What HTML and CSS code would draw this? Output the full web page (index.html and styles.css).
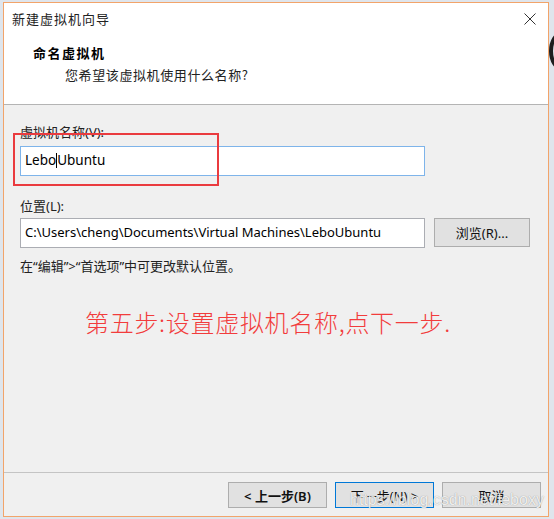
FILE: index.html
```html
<!DOCTYPE html>
<html lang="zh-CN">
<head>
<meta charset="utf-8">
<title>新建虚拟机向导</title>
<link rel="stylesheet" href="styles.css">
</head>
<body>
<div class="backdrop-arc"></div>
<div class="window">
  <div class="header">
    <div class="titlebar">
      <span class="title">新建虚拟机向导</span>
      <svg class="close" width="12" height="12" viewBox="0 0 12 12"><path d="M0.5 0.5 L11.5 11.5 M11.5 0.5 L0.5 11.5" stroke="#333" stroke-width="1" fill="none"/></svg>
    </div>
    <div class="heading">命名虚拟机</div>
    <div class="subtitle">您希望该虚拟机使用什么名称?</div>
  </div>
  <div class="content">
    <div class="label first">虚拟机名称(V):</div>
    <div class="field name-field">Lebo<span class="caret"></span>Ubuntu</div>
    <div class="label second">位置(L):</div>
    <div class="path-row">
      <div class="field path-field">C:\Users\cheng\Documents\Virtual Machines\LeboUbuntu</div>
      <div class="btn browse">浏览(R)...</div>
    </div>
    <div class="note">在“编辑”&gt;“首选项”中可更改默认位置。</div>
    <div class="annotation">第五步:设置虚拟机名称,点下一步.</div>
    <div class="red-box"></div>
  </div>
  <div class="footer">
    <div class="btn back">&lt; 上一步(B)</div>
    <div class="btn next">下一步(N) &gt;</div>
    <div class="btn cancel">取消</div>
  </div>
</div>
<div class="watermark">https://blog.csdn.net/leboxy</div>
</body>
</html>
```
FILE: styles.css
```css
html, body {
  margin: 0;
  padding: 0;
}
body {
  width: 554px;
  height: 519px;
  overflow: hidden;
  position: relative;
  background: #dfe5ec;
  font-family: "Noto Sans", "Noto Sans CJK SC", sans-serif;
  font-size: 13px;
  color: #000;
}
.backdrop-arc {
  position: absolute;
  left: 549px;
  top: 32px;
  width: 16px;
  height: 30px;
  border: 4px solid #1e1e1e;
  border-radius: 50%;
}
.window {
  position: relative;
  margin: 2px 0 0 3px;
  width: 546px;
  height: 515px;
  box-sizing: border-box;
  border: 1px solid #f2a46a;
  background: #f0f0f0;
  display: flex;
  flex-direction: column;
}
.header {
  background: #fff;
  height: 101px;
  border-bottom: 1px solid #b4b4b4;
}
.titlebar {
  height: 30px;
  display: flex;
  align-items: center;
  justify-content: space-between;
  padding-left: 8px;
  padding-right: 12px;
}
.title {
  font-family: "Noto Sans CJK SC", sans-serif;
  font-size: 13px;
  letter-spacing: 1px;
  color: #222;
}
.close {
  display: block;
  margin-top: 1px;
}
.heading {
  margin: 10px 0 0 29px;
  line-height: 20px;
  font-family: "Noto Sans CJK SC", sans-serif;
  font-weight: bold;
  font-size: 13px;
  letter-spacing: 1.5px;
}
.subtitle {
  margin: 2px 0 0 61px;
  line-height: 20px;
  font-family: "Noto Sans CJK SC", sans-serif;
  letter-spacing: 0.6px;
  color: #222;
}
.content {
  flex: 1;
  position: relative;
  padding-left: 16px;
}
.label {
  line-height: 16px;
  color: #222;
}
.label.first { margin-top: 19px; }
.label.second { margin-top: 22px; }
.field {
  box-sizing: border-box;
  height: 30px;
  width: 405px;
  background: #fff;
  border: 1px solid #abadb3;
  line-height: 27px;
  padding-left: 4px;
  white-space: nowrap;
}
.name-field {
  margin-top: 6px;
  border-color: #7eb4ea;
  font-size: 13.5px;
}
.caret {
  display: inline-block;
  width: 1px;
  height: 15px;
  background: #000;
  vertical-align: -3px;
}
.path-row {
  margin-top: 4px;
  display: flex;
  gap: 9px;
}
.btn {
  box-sizing: border-box;
  height: 26px;
  background: #e1e1e1;
  border: 1px solid #adadad;
  display: flex;
  align-items: center;
  justify-content: center;
  color: #111;
}
.browse {
  width: 96px;
  height: 29px;
}
.note {
  margin-top: 10px;
  line-height: 16px;
  color: #222;
}
.annotation {
  margin-top: 33px;
  margin-left: 65px;
  line-height: 30px;
  font-family: "Noto Sans CJK SC", sans-serif;
  font-size: 24px;
  font-weight: 300;
  letter-spacing: 0.7px;
  color: #f23c3c;
  white-space: nowrap;
}
.red-box {
  position: absolute;
  left: 9px;
  top: 28px;
  width: 206px;
  height: 53px;
  box-sizing: border-box;
  border: 2px solid #ea3b3f;
}
.footer {
  border-top: 1px solid #c4c4c4;
  padding: 9px 7px 8px 0;
  display: flex;
  justify-content: flex-end;
  gap: 8px;
}
.footer .btn {
  width: 99px;
}
.footer .back {
  font-weight: 600;
}
.footer .next {
  border-color: #0078d7;
}
.watermark {
  position: absolute;
  left: 350px;
  top: 491px;
  font-family: "Liberation Sans", Arial, sans-serif;
  font-size: 16px;
  line-height: 18px;
  color: rgba(255, 255, 255, 0.85);
  text-shadow: 0 0 1px rgba(0, 0, 0, 0.4);
  white-space: nowrap;
}
```
